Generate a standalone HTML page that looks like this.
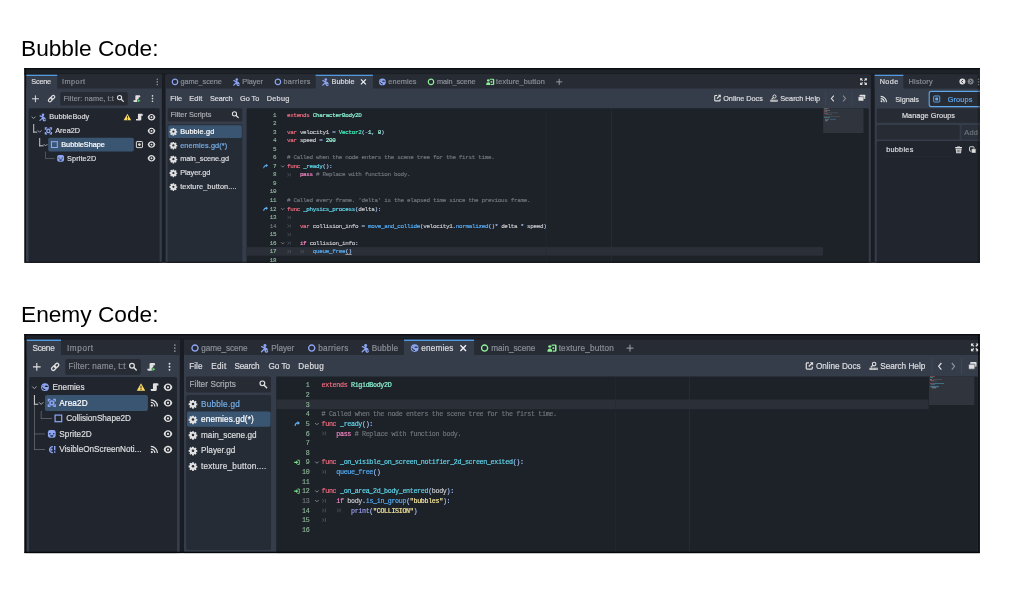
<!DOCTYPE html>
<html><head><meta charset="utf-8"><title>Code</title><style>
html,body{margin:0;padding:0;background:#fff;}
body{width:1024px;height:613px;position:relative;overflow:hidden;font-family:"Liberation Sans", sans-serif;}
.h{position:absolute;left:21.2px;font-size:22.7px;line-height:26px;color:#000;white-space:nowrap;font-family:"Liberation Sans", sans-serif;will-change:transform;}
.shot{position:absolute;overflow:hidden;will-change:transform;}
.shot>svg{position:absolute;left:0;top:0;width:100%;height:100%;}
.shot svg svg{overflow:visible;}
.t,.m{position:absolute;white-space:pre;-webkit-text-stroke:.2px currentColor;}
.t{font-family:"Liberation Sans", sans-serif;}
.m{font-family:"Liberation Mono", monospace;}
.m,.m span{-webkit-text-stroke:.14px currentColor;}
</style></head><body>
<div class="h" style="top:34.5px;">Bubble Code:</div>
<div class="h" style="top:300.5px;">Enemy Code:</div>
<div class="shot" style="left:24px;top:68px;width:956px;height:195px;"><svg viewBox="0 0 956 195"><clipPath id="c68"><rect x="0.3" y="0" width="955.6" height="194.8"/></clipPath><g clip-path="url(#c68)">
<rect x="0.3" y="0" width="955.6" height="194.8" fill="#191d23"/>
<rect x="0.3" y="0" width="955.6" height="6.6" fill="#1d2128"/>
<rect x="0.3" y="0" width="955.6" height="1.1" fill="#0b0d11"/>
<rect x="0.3" y="1.1" width="955.6" height="0.8" fill="#14171c"/>
<rect x="0.3" y="5.4" width="955.6" height="1.2" fill="#1a1b20"/>
<rect x="1.6" y="6.6" width="136.2" height="188.2" fill="#363d4a"/>
<rect x="1.6" y="6.6" width="136.2" height="14" fill="#262b34" rx="1.5"/>
<rect x="2.4" y="6.6" width="30.8" height="14.4" fill="#363d4a"/>
<rect x="2.4" y="6.8" width="30.8" height="1.2" fill="#4f9ae0"/>
<svg viewBox="0 0 16 16" x="129.4" y="10" width="7.8" height="7.8" ><circle cx="8" cy="2.500" r="1.700" fill="#8a8e96"/><circle cx="8" cy="8" r="1.700" fill="#8a8e96"/><circle cx="8" cy="13.500" r="1.700" fill="#8a8e96"/></svg>
<svg viewBox="0 0 16 16" x="7.5" y="26.9" width="7.8" height="7.8" ><path d="M8 1v14M1 8h14" stroke="#e0e0e0" stroke-width="2"/></svg>
<svg viewBox="0 0 16 16" x="23.7" y="26.7" width="7.8" height="7.8" ><g fill="none" stroke="#e0e0e0" stroke-width="2.400" transform="rotate(-45 8 8)"><rect x="0" y="5" width="9" height="6" rx="3"/><rect x="7" y="5" width="9" height="6" rx="3"/></g></svg>
<rect x="36.4" y="23.9" width="67.3" height="13.7" fill="#262b34" rx="1.5"/>
<svg viewBox="0 0 16 16" x="92.4" y="26.4" width="7.8" height="7.8" ><circle cx="6.500" cy="6.500" r="4.300" fill="none" stroke="#e0e0e0" stroke-width="2.200"/><path d="M9.800 9.800 14.300 14.300" stroke="#e0e0e0" stroke-width="2.600" stroke-linecap="round"/></svg>
<svg viewBox="0 0 16 16" x="108.9" y="26.7" width="7.8" height="7.8" ><path fill="#e0e0e0" d="M6.500 1H13a2 2 0 0 1 2 2v2h-3v3.500L9 10v5H3a2 2 0 0 1-2-2v-1.500h4V3a2 2 0 0 1 1.500-2z"/><path fill="#5fd26b" d="M10.300 9.300 15.600 12.400 10.300 15.500z"/></svg>
<svg viewBox="0 0 16 16" x="124.6" y="26.7" width="7.8" height="7.8" ><circle cx="8" cy="2.500" r="1.700" fill="#e0e0e0"/><circle cx="8" cy="8" r="1.700" fill="#e0e0e0"/><circle cx="8" cy="13.500" r="1.700" fill="#e0e0e0"/></svg>
<rect x="4.6" y="40.3" width="131" height="154.5" fill="#21262e" rx="1.5"/>
<rect x="9.2" y="56" width="1" height="8.6" fill="#c3c5c9"/>
<rect x="9.2" y="63.6" width="4" height="1" fill="#c3c5c9"/>
<rect x="15.2" y="70" width="1" height="8.3" fill="#c3c5c9"/>
<rect x="15.2" y="77.3" width="4.4" height="1" fill="#c3c5c9"/>
<rect x="21.3" y="83.6" width="0.6" height="7" fill="#6d7178"/>
<rect x="21.3" y="90" width="9.3" height="0.6" fill="#6d7178"/>
<rect x="24.2" y="69.7" width="85.6" height="13.9" fill="#3a5572" rx="1.8"/>
<svg viewBox="0 0 16 16" x="6.8" y="46.7" width="5.6" height="5.6" ><path d="M2.500 5.500 8 11l5.500-5.500" fill="none" stroke="#a9acb2" stroke-width="2.500"/></svg>
<svg viewBox="0 0 16 16" x="14.5" y="45.3" width="7.8" height="7.8" ><g fill="none" stroke="#8da5f3" stroke-width="2.500" stroke-linecap="round" stroke-linejoin="round"><path d="M9 6 7.600 10.300M8.700 7.600 3.200 5.300M8.700 7.800 12.600 9.600M7.600 10.300 3 14.600M7.600 10.300 10 11"/><path d="M13.800 11.600A2.300 2.300 0 1 0 13.800 14.400"/></g><circle cx="9.200" cy="3.100" r="2.700" fill="#8da5f3"/></svg>
<svg viewBox="0 0 16 16" x="99.5" y="45.3" width="7.8" height="7.8" ><path fill="#ffdd65" d="M8 .8 15.700 14.500H.3z"/><path d="M7.100 5.200h1.800v5.200H7.100zM7.100 11.300h1.800v1.800H7.100z" fill="#21262e"/></svg>
<svg viewBox="0 0 16 16" x="111.5" y="45.3" width="7.8" height="7.8" ><path fill="#e0e0e0" d="M6.500 1H13a2 2 0 0 1 2 2v2h-3v7a3 3 0 0 1-3 3H3a2 2 0 0 1-2-2v-1.500h4V3a2 2 0 0 1 1.500-2z"/></svg>
<svg viewBox="0 0 16 16" x="123.6" y="45.3" width="7.8" height="7.8" ><path fill="#e0e0e0" fill-rule="evenodd" d="M8 1.300C4.300 1.300 1.400 4 .2 7.600a1.200 1.200 0 0 0 0 .8C1.400 12 4.300 14.700 8 14.700s6.600-2.700 7.800-6.300a1.200 1.200 0 0 0 0-.8C14.600 4 11.700 1.300 8 1.300zM8 3.700a4.300 4.300 0 0 1 0 8.600 4.300 4.300 0 0 1 0-8.600zM8 6.100a1.900 1.900 0 0 0 0 3.800 1.900 1.900 0 0 0 0-3.800z"/></svg>
<svg viewBox="0 0 16 16" x="12.8" y="60.4" width="5.6" height="5.6" ><path d="M2.500 5.500 8 11l5.500-5.500" fill="none" stroke="#a9acb2" stroke-width="2.500"/></svg>
<svg viewBox="0 0 16 16" x="20.5" y="59" width="7.8" height="7.8" ><g fill="#8da5f3"><path d="M.5.500h5v2.700H3.200v2.300H.5zM15.500.500v5h-2.700V3.200h-2.300V.500zM.5 15.500v-5h2.700v2.300h2.300v2.700zM15.500 15.500h-5v-2.700h2.300v-2.300h2.700z"/></g><circle cx="8" cy="8" r="3.400" fill="none" stroke="#8da5f3" stroke-width="2.800"/></svg>
<svg viewBox="0 0 16 16" x="123.6" y="59" width="7.8" height="7.8" ><path fill="#e0e0e0" fill-rule="evenodd" d="M8 1.300C4.300 1.300 1.400 4 .2 7.600a1.200 1.200 0 0 0 0 .8C1.400 12 4.300 14.700 8 14.700s6.600-2.700 7.800-6.300a1.200 1.200 0 0 0 0-.8C14.600 4 11.700 1.300 8 1.300zM8 3.700a4.300 4.300 0 0 1 0 8.600 4.300 4.300 0 0 1 0-8.600zM8 6.100a1.900 1.900 0 0 0 0 3.800 1.900 1.900 0 0 0 0-3.800z"/></svg>
<svg viewBox="0 0 16 16" x="18.8" y="74.1" width="5.6" height="5.6" ><path d="M2.500 5.500 8 11l5.500-5.500" fill="none" stroke="#a9acb2" stroke-width="2.500"/></svg>
<svg viewBox="0 0 16 16" x="26.5" y="72.7" width="7.8" height="7.8" ><rect x="2" y="2" width="12" height="12" fill="none" stroke="#8da5f3" stroke-width="2.200"/></svg>
<svg viewBox="0 0 16 16" x="111.5" y="72.7" width="7.8" height="7.8" ><rect x="1.800" y="1.800" width="12.400" height="12.400" rx="1.200" fill="none" stroke="#e0e0e0" stroke-width="2"/><circle cx="8" cy="8" r="2.700" fill="#e0e0e0"/></svg>
<svg viewBox="0 0 16 16" x="123.6" y="72.7" width="7.8" height="7.8" ><path fill="#e0e0e0" fill-rule="evenodd" d="M8 1.300C4.300 1.300 1.400 4 .2 7.600a1.200 1.200 0 0 0 0 .8C1.400 12 4.300 14.700 8 14.700s6.600-2.700 7.800-6.300a1.200 1.200 0 0 0 0-.8C14.600 4 11.700 1.300 8 1.300zM8 3.700a4.300 4.300 0 0 1 0 8.600 4.300 4.300 0 0 1 0-8.600zM8 6.100a1.900 1.900 0 0 0 0 3.800 1.900 1.900 0 0 0 0-3.800z"/></svg>
<svg viewBox="0 0 16 16" x="32.7" y="86.4" width="7.8" height="7.8" ><path fill="#8da5f3" d="M5 1h6a4 4 0 0 1 4 4v6a4 4 0 0 1-4 4H5a4 4 0 0 1-4-4V5a4 4 0 0 1 4-4z"/><circle cx="4.600" cy="7.600" r="1.400" fill="#21262e"/><circle cx="11.400" cy="7.600" r="1.400" fill="#21262e"/><path d="M5.200 10.600h5.600v.6A2 2 0 0 1 8.800 13.200H7.200A2 2 0 0 1 5.200 11.200z" fill="#21262e"/></svg>
<svg viewBox="0 0 16 16" x="123.6" y="86.4" width="7.8" height="7.8" ><path fill="#e0e0e0" fill-rule="evenodd" d="M8 1.300C4.300 1.300 1.400 4 .2 7.600a1.200 1.200 0 0 0 0 .8C1.400 12 4.300 14.700 8 14.700s6.600-2.700 7.800-6.300a1.200 1.200 0 0 0 0-.8C14.600 4 11.700 1.300 8 1.300zM8 3.700a4.300 4.300 0 0 1 0 8.600 4.300 4.300 0 0 1 0-8.600zM8 6.100a1.900 1.900 0 0 0 0 3.800 1.900 1.900 0 0 0 0-3.800z"/></svg>
<rect x="141.6" y="6.6" width="705.2" height="188.2" fill="#363d4a"/>
<rect x="141.6" y="6.6" width="705.2" height="14" fill="#262b34" rx="1.5"/>
<rect x="291.6" y="6.6" width="57.3" height="14.4" fill="#363d4a"/>
<rect x="291.6" y="6.8" width="57.3" height="1.2" fill="#4f9ae0"/>
<svg viewBox="0 0 16 16" x="147.1" y="10" width="7.8" height="7.8" ><circle cx="8" cy="8" r="5.600" fill="none" stroke="#8da5f3" stroke-width="2.400"/></svg>
<svg viewBox="0 0 16 16" x="208.3" y="10" width="7.8" height="7.8" ><g fill="none" stroke="#8da5f3" stroke-width="2.500" stroke-linecap="round" stroke-linejoin="round"><path d="M9 6 7.600 10.300M8.700 7.600 3.200 5.300M8.700 7.800 12.600 9.600M7.600 10.300 3 14.600M7.600 10.300 10 11"/><path d="M13.800 11.600A2.300 2.300 0 1 0 13.800 14.400"/></g><circle cx="9.200" cy="3.100" r="2.700" fill="#8da5f3"/></svg>
<svg viewBox="0 0 16 16" x="250" y="10" width="7.8" height="7.8" ><circle cx="8" cy="8" r="5.600" fill="none" stroke="#8da5f3" stroke-width="2.400"/></svg>
<svg viewBox="0 0 16 16" x="297.3" y="10" width="7.8" height="7.8" ><g fill="none" stroke="#8da5f3" stroke-width="2.500" stroke-linecap="round" stroke-linejoin="round"><path d="M9 6 7.600 10.300M8.700 7.600 3.200 5.300M8.700 7.800 12.600 9.600M7.600 10.300 3 14.600M7.600 10.300 10 11"/><path d="M13.800 11.600A2.300 2.300 0 1 0 13.800 14.400"/></g><circle cx="9.200" cy="3.100" r="2.700" fill="#8da5f3"/></svg>
<svg viewBox="0 0 16 16" x="335.8" y="10.3" width="7.2" height="7.2" ><path d="M2.500 2.500l11 11M13.500 2.500 2.500 13.500" stroke="#f0f0f0" stroke-width="2.800"/></svg>
<svg viewBox="0 0 16 16" x="354.5" y="10" width="7.8" height="7.8" ><circle cx="8" cy="8" r="7" fill="#8da5f3"/><path d="M7.200 7.600a3.300 3.300 0 0 1 6.400 0z" fill="#1d2229"/><path d="M3.500 9.300c.9 1.500 2.400 2.600 4.300 3" fill="none" stroke="#1d2229" stroke-width="2" stroke-linecap="round"/><path d="M2.300 6.200 5.500 4.600" fill="none" stroke="#5a6aa8" stroke-width="1.200"/></svg>
<svg viewBox="0 0 16 16" x="403.1" y="10" width="7.8" height="7.8" ><circle cx="8" cy="8" r="5.600" fill="none" stroke="#8eef97" stroke-width="2.400"/></svg>
<svg viewBox="0 0 16 16" x="462.5" y="10" width="7.8" height="7.8" ><g fill="#8eef97" transform="translate(8 8) scale(1.13 .95) translate(-8 -8)"><circle cx="4.200" cy="5" r="2.500"/><path d="M.3 14.800C.3 10.600 2 9 4.200 9S8.100 10.600 8.100 14.800z"/><path d="M7 1.200h6a2 2 0 0 1 2 2v9.600a2 2 0 0 1-2 2H9v-2.400h3.500V3.600H7z"/><circle cx="9.800" cy="8" r="1.700"/></g></svg>
<svg viewBox="0 0 16 16" x="531.7" y="10.4" width="7" height="7" ><path d="M8 1v14M1 8h14" stroke="#a4a7ac" stroke-width="2"/></svg>
<svg viewBox="0 0 16 16" x="835.6" y="9.7" width="7.8" height="7.8" ><g fill="#e0e0e0"><path d="M1 1h5.500L4.600 2.900 7 5.300 5.300 7 2.900 4.600 1 6.500zM15 1v5.500L13.100 4.600 10.700 7 9 5.300l2.400-2.400L9.500 1zM1 15V9.500l1.900 1.900L5.300 9 7 10.700l-2.400 2.400L6.500 15zM15 15H9.500l1.900-1.900L9 10.700 10.700 9l2.400 2.400L15 9.500z"/></g></svg>
<svg viewBox="0 0 16 16" x="689.5" y="26.3" width="7.8" height="7.8" ><path d="M7.500 2.500H4A1.500 1.500 0 0 0 2.500 4v8A1.500 1.500 0 0 0 4 13.500h8a1.500 1.500 0 0 0 1.500-1.500V9" fill="none" stroke="#e0e0e0" stroke-width="2.200"/><path d="M7 9l6-6" fill="none" stroke="#e0e0e0" stroke-width="2.400"/><path d="M9 1h6v6z" fill="#e0e0e0"/></svg>
<svg viewBox="0 0 16 16" x="746.1" y="26.3" width="7.8" height="7.8" ><circle cx="9" cy="4.500" r="3.200" fill="none" stroke="#e0e0e0" stroke-width="2"/><path d="M6.600 6.900 3.200 10.300" stroke="#e0e0e0" stroke-width="2.200"/><path d="M.5 11h15v4.500H.5z" fill="#e0e0e0"/><path d="M3.200 12.300v2M5.900 12.300v2M8.400 12.300v2M10.900 12.300v2M13.200 12.300v2" stroke="#363d4a" stroke-width="1"/></svg>
<rect x="801.5" y="23.5" width="0.6" height="14" fill="#444b58"/>
<svg viewBox="0 0 16 16" x="804.7" y="26.6" width="7.8" height="7.8" ><path d="M10.500 2 5.500 8l5 6" fill="none" stroke="#e0e0e0" stroke-width="2.200"/></svg>
<svg viewBox="0 0 16 16" x="816.4" y="26.6" width="7.8" height="7.8" ><path d="M5.500 2 10.500 8l-5 6" fill="none" stroke="#8a8e96" stroke-width="2.200"/></svg>
<rect x="827.6" y="23.5" width="0.6" height="14" fill="#444b58"/>
<svg viewBox="0 0 16 16" x="833.7" y="26" width="7.8" height="7.8" ><g fill="#e0e0e0"><rect x="4" y="1.500" width="11.500" height="8.500" rx="1.200"/><rect x="1" y="5.500" width="11.500" height="9" rx="1.200" stroke="#363d4a" stroke-width="1.200"/></g></svg>
<rect x="143.7" y="40.3" width="74.6" height="13.3" fill="#262b34" rx="1.5"/>
<svg viewBox="0 0 16 16" x="207.3" y="42.7" width="7.8" height="7.8" ><circle cx="6.500" cy="6.500" r="4.300" fill="none" stroke="#e0e0e0" stroke-width="2.200"/><path d="M9.800 9.800 14.300 14.300" stroke="#e0e0e0" stroke-width="2.600" stroke-linecap="round"/></svg>
<rect x="143.7" y="56.2" width="74.6" height="138.6" fill="#262c36" rx="1.5"/>
<rect x="144.2" y="57.3" width="73.6" height="12.7" fill="#3a5572" rx="1.5"/>
<svg viewBox="0 0 16 16" x="145.5" y="59.7" width="7.8" height="7.8" ><path fill="#e0e0e0" d="M6.600.8h2.800l.4 2.100 1 .4 1.800-1.200 2 2-1.200 1.800.4 1 2.100.4v2.800l-2.100.4-.4 1 1.200 1.800-2 2-1.800-1.200-1 .4-.4 2.100H6.600l-.4-2.100-1-.4-1.800 1.200-2-2 1.200-1.800-.4-1-2.100-.4V6.600l2.100-.4.4-1-1.200-1.800 2-2 1.800 1.200 1-.4z"/><circle cx="8" cy="8" r="2.300" fill="#262c36"/></svg>
<svg viewBox="0 0 16 16" x="145.5" y="73.5" width="7.8" height="7.8" ><path fill="#e0e0e0" d="M6.600.8h2.800l.4 2.100 1 .4 1.800-1.200 2 2-1.200 1.800.4 1 2.100.4v2.800l-2.100.4-.4 1 1.200 1.800-2 2-1.800-1.200-1 .4-.4 2.100H6.600l-.4-2.100-1-.4-1.800 1.200-2-2 1.200-1.800-.4-1-2.100-.4V6.600l2.100-.4.4-1-1.200-1.800 2-2 1.800 1.200 1-.4z"/><circle cx="8" cy="8" r="2.300" fill="#262c36"/></svg>
<svg viewBox="0 0 16 16" x="145.5" y="87.3" width="7.8" height="7.8" ><path fill="#e0e0e0" d="M6.600.8h2.800l.4 2.100 1 .4 1.800-1.200 2 2-1.200 1.800.4 1 2.100.4v2.800l-2.100.4-.4 1 1.200 1.800-2 2-1.800-1.200-1 .4-.4 2.100H6.600l-.4-2.100-1-.4-1.800 1.200-2-2 1.200-1.800-.4-1-2.100-.4V6.600l2.100-.4.4-1-1.200-1.800 2-2 1.800 1.200 1-.4z"/><circle cx="8" cy="8" r="2.300" fill="#262c36"/></svg>
<svg viewBox="0 0 16 16" x="145.5" y="101.1" width="7.8" height="7.8" ><path fill="#e0e0e0" d="M6.600.8h2.800l.4 2.100 1 .4 1.800-1.200 2 2-1.200 1.800.4 1 2.100.4v2.800l-2.100.4-.4 1 1.200 1.800-2 2-1.800-1.200-1 .4-.4 2.100H6.600l-.4-2.100-1-.4-1.800 1.200-2-2 1.200-1.800-.4-1-2.100-.4V6.600l2.100-.4.4-1-1.200-1.800 2-2 1.800 1.200 1-.4z"/><circle cx="8" cy="8" r="2.300" fill="#262c36"/></svg>
<svg viewBox="0 0 16 16" x="145.5" y="114.9" width="7.8" height="7.8" ><path fill="#e0e0e0" d="M6.600.8h2.800l.4 2.100 1 .4 1.800-1.200 2 2-1.200 1.800.4 1 2.100.4v2.800l-2.100.4-.4 1 1.200 1.800-2 2-1.800-1.200-1 .4-.4 2.100H6.600l-.4-2.100-1-.4-1.800 1.200-2-2 1.200-1.800-.4-1-2.100-.4V6.600l2.100-.4.4-1-1.200-1.800 2-2 1.800 1.200 1-.4z"/><circle cx="8" cy="8" r="2.300" fill="#262c36"/></svg>
<rect x="222.6" y="40.3" width="622.2" height="154.5" fill="#1d2229" rx="1.2"/>
<rect x="222.6" y="179.12" width="576.4" height="8.53" fill="#2b3038"/>
<rect x="521.8" y="40.3" width="0.6" height="154.5" fill="#262b33"/>
<rect x="587" y="40.3" width="0.6" height="154.5" fill="#2a3039"/>
<rect x="799.2" y="40.3" width="40.3" height="24.7" fill="#30353d"/>
<rect x="800" y="40" width="5" height="0.45" fill="#ff7085" opacity=".7"/>
<rect x="800" y="40.78" width="3" height="0.45" fill="#42ffc2" opacity=".7"/>
<rect x="800" y="42.34" width="2" height="0.45" fill="#ff7085" opacity=".7"/>
<rect x="802" y="42.34" width="4" height="0.45" fill="#cdcfd2" opacity=".7"/>
<rect x="800" y="43.12" width="2" height="0.45" fill="#ff7085" opacity=".7"/>
<rect x="802" y="43.12" width="1" height="0.45" fill="#cdcfd2" opacity=".7"/>
<rect x="800" y="44.68" width="14" height="0.45" fill="#73777e" opacity=".7"/>
<rect x="800" y="45.46" width="4" height="0.45" fill="#ff7085" opacity=".7"/>
<rect x="801" y="46.24" width="7" height="0.45" fill="#73777e" opacity=".7"/>
<rect x="800" y="48.58" width="16" height="0.45" fill="#73777e" opacity=".7"/>
<rect x="800" y="49.36" width="6" height="0.45" fill="#62dcf2" opacity=".7"/>
<rect x="801" y="50.92" width="4" height="0.45" fill="#cdcfd2" opacity=".7"/>
<rect x="806" y="50.92" width="6" height="0.45" fill="#57b3ff" opacity=".7"/>
<rect x="801" y="52.48" width="3" height="0.45" fill="#cdcfd2" opacity=".7"/>
<rect x="802" y="53.26" width="1" height="0.45" fill="#57b3ff" opacity=".7"/>
<svg viewBox="0 0 16 16" x="239" y="95.48" width="5.2" height="5.2" ><path fill="#5fb2f0" d="M9 1 15.500 6.300 9 11.600V8.500C6 8.500 4.200 10 3.700 14.800H.8C.8 8 4.500 4.600 9 4.300z"/></svg>
<svg viewBox="0 0 16 16" x="239" y="138.13" width="5.2" height="5.2" ><path fill="#5fb2f0" d="M9 1 15.500 6.300 9 11.600V8.500C6 8.500 4.200 10 3.700 14.800H.8C.8 8 4.500 4.600 9 4.300z"/></svg>
<svg viewBox="0 0 16 16" x="256.2" y="95.88" width="5" height="5" ><path d="M3 5.500 8 10.500l5-5" fill="none" stroke="#9da1a8" stroke-width="2.200"/></svg>
<svg viewBox="0 0 16 16" x="256.2" y="138.53" width="5" height="5" ><path d="M3 5.500 8 10.500l5-5" fill="none" stroke="#9da1a8" stroke-width="2.200"/></svg>
<svg viewBox="0 0 16 16" x="256.2" y="172.65" width="5" height="5" ><path d="M3 5.500 8 10.500l5-5" fill="none" stroke="#9da1a8" stroke-width="2.200"/></svg>
<svg viewBox="0 0 16 16" x="262.8" y="104.41" width="4.8" height="4.8" ><path d="M2 3 7.500 8 2 13M11.500 2.500v11" fill="none" stroke="#5b616b" stroke-width="2"/></svg>
<svg viewBox="0 0 16 16" x="262.8" y="147.06" width="4.8" height="4.8" ><path d="M2 3 7.500 8 2 13M11.500 2.500v11" fill="none" stroke="#5b616b" stroke-width="2"/></svg>
<svg viewBox="0 0 16 16" x="262.8" y="155.59" width="4.8" height="4.8" ><path d="M2 3 7.500 8 2 13M11.500 2.500v11" fill="none" stroke="#5b616b" stroke-width="2"/></svg>
<svg viewBox="0 0 16 16" x="262.8" y="164.12" width="4.8" height="4.8" ><path d="M2 3 7.500 8 2 13M11.500 2.500v11" fill="none" stroke="#5b616b" stroke-width="2"/></svg>
<svg viewBox="0 0 16 16" x="262.8" y="172.65" width="4.8" height="4.8" ><path d="M2 3 7.500 8 2 13M11.500 2.500v11" fill="none" stroke="#5b616b" stroke-width="2"/></svg>
<svg viewBox="0 0 16 16" x="262.8" y="181.18" width="4.8" height="4.8" ><path d="M2 3 7.500 8 2 13M11.500 2.500v11" fill="none" stroke="#5b616b" stroke-width="2"/></svg>
<svg viewBox="0 0 16 16" x="275.78" y="181.18" width="4.8" height="4.8" ><path d="M2 3 7.500 8 2 13M11.500 2.500v11" fill="none" stroke="#5b616b" stroke-width="2"/></svg>
<rect x="321.33" y="186.28" width="6.49" height="0.6" fill="#cfd2d6"/>
<rect x="850.7" y="6.6" width="105.2" height="188.2" fill="#363d4a"/>
<rect x="850.7" y="6.6" width="105.2" height="14" fill="#262b34"/>
<rect x="850.7" y="6.6" width="28.7" height="14.4" fill="#363d4a"/>
<rect x="850.7" y="6.8" width="28.7" height="1.2" fill="#4f9ae0"/>
<svg viewBox="0 0 16 16" x="935.2" y="10.4" width="6.4" height="6.4" ><circle cx="8" cy="8" r="7.500" fill="#e0e0e0"/><path d="M9.800 3.800 5.600 8l4.200 4.200" fill="none" stroke="#262b34" stroke-width="2.400"/></svg>
<svg viewBox="0 0 16 16" x="943.4" y="10.4" width="6.4" height="6.4" ><circle cx="8" cy="8" r="7.500" fill="#7b7f86"/><path d="M6.200 3.800 10.400 8l-4.200 4.200" fill="none" stroke="#262b34" stroke-width="2.400"/></svg>
<svg viewBox="0 0 16 16" x="950.7" y="10" width="7.8" height="7.8" ><circle cx="8" cy="2.500" r="1.700" fill="#8a8e96"/><circle cx="8" cy="8" r="1.700" fill="#8a8e96"/><circle cx="8" cy="13.500" r="1.700" fill="#8a8e96"/></svg>
<svg viewBox="0 0 16 16" x="855.9" y="27.1" width="7.8" height="7.8" ><g fill="none" stroke="#e0e0e0" stroke-width="2.300"><path d="M1.500 7.200A7.300 7.300 0 0 1 8.800 14.500M1.500 2.500a12 12 0 0 1 12 12"/></g><circle cx="3.300" cy="12.700" r="2" fill="#e0e0e0"/></svg>
<rect x="905.2" y="23.4" width="54.7" height="15.2" fill="#262b34" rx="2" stroke="#5fa8ec" stroke-width="1.1"/>
<svg viewBox="0 0 16 16" x="908.8" y="27.1" width="7.8" height="7.8" ><rect x="1.800" y="1.800" width="12.400" height="12.400" rx="1.200" fill="none" stroke="#5fa8ec" stroke-width="2"/><rect x="5" y="5" width="6" height="6" rx="1" fill="#5fa8ec"/></svg>
<rect x="852.8" y="40.6" width="107.1" height="14.1" fill="#262b34" rx="1.5"/>
<rect x="852.8" y="57" width="82.9" height="14.6" fill="#262b34" rx="1.5"/>
<rect x="937.3" y="57" width="22.6" height="14.6" fill="#2b313a" rx="1.5"/>
<rect x="852.8" y="73.1" width="107.1" height="121.7" fill="#21262e" rx="1.5"/>
<rect x="860" y="88.6" width="67" height="0.4" fill="#2a3038"/>
<svg viewBox="0 0 16 16" x="930.7" y="77.9" width="7.8" height="7.8" ><path fill="#e0e0e0" d="M5 1h6v1.500h4v2.200H1V2.500h4zM2 6h12l-1 9H3z"/><path d="M5.300 7.500v6M8 7.500v6M10.700 7.500v6" stroke="#21262e" stroke-width="1.100"/></svg>
<svg viewBox="0 0 16 16" x="944.7" y="77.9" width="7.8" height="7.8" ><rect x="1.800" y="1.800" width="9" height="9" rx="1.200" fill="none" stroke="#e0e0e0" stroke-width="2"/><rect x="5.800" y="5.800" width="9" height="9" rx="1.200" fill="#e0e0e0" stroke="#21262e" stroke-width="1"/></svg>
<rect x="0.3" y="0" width="1.4" height="194.8" fill="#06070a"/>
<rect x="0.3" y="193.8" width="955.6" height="1" fill="#06070a"/>
<rect x="953.7" y="6.6" width="2.2" height="188.2" fill="#000" opacity=".25"/>
</g></svg>
<span class="t" style="top:9.14px;height:10.22px;line-height:10.22px;font-size:7.3px;color:#dcdde0;left:7.37px;letter-spacing:-0.24px;">Scene</span>
<span class="t" style="top:9.14px;height:10.22px;line-height:10.22px;font-size:7.3px;color:#8a8e96;left:37.97px;letter-spacing:0.49px;">Import</span>
<span class="t" style="top:25.84px;height:10.22px;line-height:10.22px;font-size:7.3px;color:#8a8e96;left:39.47px;letter-spacing:0.11px;">Filter: name, t:t</span>
<span class="t" style="top:44.44px;height:10.22px;line-height:10.22px;font-size:7.3px;color:#dcdde0;left:25.37px;letter-spacing:0.05px;">BubbleBody</span>
<span class="t" style="top:58.14px;height:10.22px;line-height:10.22px;font-size:7.3px;color:#dcdde0;left:31.17px;letter-spacing:0.04px;">Area2D</span>
<span class="t" style="top:71.84px;height:10.22px;line-height:10.22px;font-size:7.3px;color:#ffffff;left:37.27px;letter-spacing:-0.03px;">BubbleShape</span>
<span class="t" style="top:85.54px;height:10.22px;line-height:10.22px;font-size:7.3px;color:#dcdde0;left:43.07px;letter-spacing:0.11px;">Sprite2D</span>
<span class="t" style="top:9.14px;height:10.22px;line-height:10.22px;font-size:7.3px;color:#8a8e96;left:156.47px;letter-spacing:-0.05px;">game_scene</span>
<span class="t" style="top:9.14px;height:10.22px;line-height:10.22px;font-size:7.3px;color:#8a8e96;left:218.27px;letter-spacing:0.01px;">Player</span>
<span class="t" style="top:9.14px;height:10.22px;line-height:10.22px;font-size:7.3px;color:#8a8e96;left:259.47px;letter-spacing:0.33px;">barriers</span>
<span class="t" style="top:9.14px;height:10.22px;line-height:10.22px;font-size:7.3px;color:#dcdde0;left:307.47px;letter-spacing:0.09px;">Bubble</span>
<span class="t" style="top:9.14px;height:10.22px;line-height:10.22px;font-size:7.3px;color:#8a8e96;left:364.37px;letter-spacing:0.08px;">enemies</span>
<span class="t" style="top:9.14px;height:10.22px;line-height:10.22px;font-size:7.3px;color:#8a8e96;left:413.07px;letter-spacing:-0.1px;">main_scene</span>
<span class="t" style="top:9.14px;height:10.22px;line-height:10.22px;font-size:7.3px;color:#8a8e96;left:471.97px;letter-spacing:0.17px;">texture_button</span>
<span class="t" style="top:25.74px;height:10.22px;line-height:10.22px;font-size:7.3px;color:#dcdde0;left:146.37px;letter-spacing:0px;">File</span>
<span class="t" style="top:25.74px;height:10.22px;line-height:10.22px;font-size:7.3px;color:#dcdde0;left:165.27px;letter-spacing:0.16px;">Edit</span>
<span class="t" style="top:25.74px;height:10.22px;line-height:10.22px;font-size:7.3px;color:#dcdde0;left:185.97px;letter-spacing:-0.09px;">Search</span>
<span class="t" style="top:25.74px;height:10.22px;line-height:10.22px;font-size:7.3px;color:#dcdde0;left:215.97px;letter-spacing:0px;">Go To</span>
<span class="t" style="top:25.74px;height:10.22px;line-height:10.22px;font-size:7.3px;color:#dcdde0;left:242.67px;letter-spacing:0.29px;">Debug</span>
<span class="t" style="top:25.74px;height:10.22px;line-height:10.22px;font-size:7.3px;color:#dcdde0;left:699.17px;letter-spacing:0px;">Online Docs</span>
<span class="t" style="top:25.74px;height:10.22px;line-height:10.22px;font-size:7.3px;color:#dcdde0;left:756.27px;letter-spacing:-0.04px;">Search Help</span>
<span class="t" style="top:42.14px;height:10.22px;line-height:10.22px;font-size:7.3px;color:#a9acb2;left:146.57px;letter-spacing:0.02px;">Filter Scripts</span>
<span class="t" style="top:58.84px;height:10.22px;line-height:10.22px;font-size:7.3px;color:#ffffff;left:156.17px;letter-spacing:0.16px;">Bubble.gd</span>
<span class="t" style="top:72.64px;height:10.22px;line-height:10.22px;font-size:7.3px;color:#74aee6;left:156.17px;letter-spacing:0.14px;">enemies.gd(*)</span>
<span class="t" style="top:86.44px;height:10.22px;line-height:10.22px;font-size:7.3px;color:#dcdde0;left:156.17px;letter-spacing:-0.05px;">main_scene.gd</span>
<span class="t" style="top:100.24px;height:10.22px;line-height:10.22px;font-size:7.3px;color:#dcdde0;left:156.17px;letter-spacing:-0.04px;">Player.gd</span>
<span class="t" style="top:114.04px;height:10.22px;line-height:10.22px;font-size:7.3px;color:#dcdde0;left:156.17px;letter-spacing:0.1px;">texture_button....</span>
<span class="m" style="top:43.67px;height:8.25px;line-height:8.25px;font-size:5.9px;color:#8fb79a;right:703.8px;text-align:right;letter-spacing:-0.29px;">1</span>
<span class="m" style="top:52.2px;height:8.25px;line-height:8.25px;font-size:5.9px;color:#8fb79a;right:703.8px;text-align:right;letter-spacing:-0.29px;">2</span>
<span class="m" style="top:60.73px;height:8.25px;line-height:8.25px;font-size:5.9px;color:#8fb79a;right:703.8px;text-align:right;letter-spacing:-0.29px;">3</span>
<span class="m" style="top:69.26px;height:8.25px;line-height:8.25px;font-size:5.9px;color:#8fb79a;right:703.8px;text-align:right;letter-spacing:-0.29px;">4</span>
<span class="m" style="top:77.79px;height:8.25px;line-height:8.25px;font-size:5.9px;color:#8fb79a;right:703.8px;text-align:right;letter-spacing:-0.29px;">5</span>
<span class="m" style="top:86.32px;height:8.25px;line-height:8.25px;font-size:5.9px;color:#8fb79a;right:703.8px;text-align:right;letter-spacing:-0.29px;">6</span>
<span class="m" style="top:94.85px;height:8.25px;line-height:8.25px;font-size:5.9px;color:#8fb79a;right:703.8px;text-align:right;letter-spacing:-0.29px;">7</span>
<span class="m" style="top:103.38px;height:8.25px;line-height:8.25px;font-size:5.9px;color:#8fb79a;right:703.8px;text-align:right;letter-spacing:-0.29px;">8</span>
<span class="m" style="top:111.91px;height:8.25px;line-height:8.25px;font-size:5.9px;color:#8fb79a;right:703.8px;text-align:right;letter-spacing:-0.29px;">9</span>
<span class="m" style="top:120.44px;height:8.25px;line-height:8.25px;font-size:5.9px;color:#8fb79a;right:703.8px;text-align:right;letter-spacing:-0.29px;">10</span>
<span class="m" style="top:128.97px;height:8.25px;line-height:8.25px;font-size:5.9px;color:#8fb79a;right:703.8px;text-align:right;letter-spacing:-0.29px;">11</span>
<span class="m" style="top:137.5px;height:8.25px;line-height:8.25px;font-size:5.9px;color:#8fb79a;right:703.8px;text-align:right;letter-spacing:-0.29px;">12</span>
<span class="m" style="top:146.03px;height:8.25px;line-height:8.25px;font-size:5.9px;color:#8fb79a;right:703.8px;text-align:right;letter-spacing:-0.29px;">13</span>
<span class="m" style="top:154.56px;height:8.25px;line-height:8.25px;font-size:5.9px;color:#73777e;right:703.8px;text-align:right;letter-spacing:-0.29px;">14</span>
<span class="m" style="top:163.09px;height:8.25px;line-height:8.25px;font-size:5.9px;color:#8fb79a;right:703.8px;text-align:right;letter-spacing:-0.29px;">15</span>
<span class="m" style="top:171.62px;height:8.25px;line-height:8.25px;font-size:5.9px;color:#8fb79a;right:703.8px;text-align:right;letter-spacing:-0.29px;">16</span>
<span class="m" style="top:180.15px;height:8.25px;line-height:8.25px;font-size:5.9px;color:#8fb79a;right:703.8px;text-align:right;letter-spacing:-0.29px;">17</span>
<span class="m" style="top:188.68px;height:8.25px;line-height:8.25px;font-size:5.9px;color:#8fb79a;right:703.8px;text-align:right;letter-spacing:-0.29px;">18</span>
<span class="m" style="top:43.67px;height:8.25px;line-height:8.25px;font-size:5.9px;color:#cdcfd2;left:262.9px;letter-spacing:-0.29px;"><span style="color:#ff7085">extends </span><span style="color:#8fffdb">CharacterBody2D</span></span>
<span class="m" style="top:60.73px;height:8.25px;line-height:8.25px;font-size:5.9px;color:#cdcfd2;left:262.9px;letter-spacing:-0.29px;"><span style="color:#ff7085">var </span><span style="color:#cdcfd2">velocity1 </span><span style="color:#abc9ff">= </span><span style="color:#42ffc2">Vector2</span><span style="color:#abc9ff">(-</span><span style="color:#a1ffe0">1</span><span style="color:#abc9ff">, </span><span style="color:#a1ffe0">0</span><span style="color:#abc9ff">)</span></span>
<span class="m" style="top:69.26px;height:8.25px;line-height:8.25px;font-size:5.9px;color:#cdcfd2;left:262.9px;letter-spacing:-0.29px;"><span style="color:#ff7085">var </span><span style="color:#cdcfd2">speed </span><span style="color:#abc9ff">= </span><span style="color:#a1ffe0">200</span></span>
<span class="m" style="top:86.32px;height:8.25px;line-height:8.25px;font-size:5.9px;color:#cdcfd2;left:262.9px;letter-spacing:-0.29px;"><span style="color:#73777e"># Called when the node enters the scene tree for the first time.</span></span>
<span class="m" style="top:94.85px;height:8.25px;line-height:8.25px;font-size:5.9px;color:#cdcfd2;left:262.9px;letter-spacing:-0.29px;"><span style="color:#ff7085">func </span><span style="color:#62dcf2">_ready</span><span style="color:#abc9ff">():</span></span>
<span class="m" style="top:103.38px;height:8.25px;line-height:8.25px;font-size:5.9px;color:#cdcfd2;left:262.9px;letter-spacing:-0.29px;"><span style="color:#cdcfd2">    </span><span style="color:#ff8ccc">pass </span><span style="color:#73777e"># Replace with function body.</span></span>
<span class="m" style="top:128.97px;height:8.25px;line-height:8.25px;font-size:5.9px;color:#cdcfd2;left:262.9px;letter-spacing:-0.29px;"><span style="color:#73777e"># Called every frame. &#x27;delta&#x27; is the elapsed time since the previous frame.</span></span>
<span class="m" style="top:137.5px;height:8.25px;line-height:8.25px;font-size:5.9px;color:#cdcfd2;left:262.9px;letter-spacing:-0.29px;"><span style="color:#ff7085">func </span><span style="color:#62dcf2">_physics_process</span><span style="color:#abc9ff">(</span><span style="color:#cdcfd2">delta</span><span style="color:#abc9ff">):</span></span>
<span class="m" style="top:154.56px;height:8.25px;line-height:8.25px;font-size:5.9px;color:#cdcfd2;left:262.9px;letter-spacing:-0.29px;"><span style="color:#cdcfd2">    </span><span style="color:#ff7085">var </span><span style="color:#cdcfd2">collision_info </span><span style="color:#abc9ff">= </span><span style="color:#57b3ff">move_and_collide</span><span style="color:#abc9ff">(</span><span style="color:#cdcfd2">velocity1</span><span style="color:#abc9ff">.</span><span style="color:#57b3ff">normalized</span><span style="color:#abc9ff">()* </span><span style="color:#cdcfd2">delta </span><span style="color:#abc9ff">* </span><span style="color:#cdcfd2">speed</span><span style="color:#abc9ff">)</span></span>
<span class="m" style="top:171.62px;height:8.25px;line-height:8.25px;font-size:5.9px;color:#cdcfd2;left:262.9px;letter-spacing:-0.29px;"><span style="color:#cdcfd2">    </span><span style="color:#ff8ccc">if </span><span style="color:#cdcfd2">collision_info</span><span style="color:#abc9ff">:</span></span>
<span class="m" style="top:180.15px;height:8.25px;line-height:8.25px;font-size:5.9px;color:#cdcfd2;left:262.9px;letter-spacing:-0.29px;"><span style="color:#cdcfd2">        </span><span style="color:#57b3ff">queue_free</span><span style="color:#abc9ff">()</span></span>
<span class="t" style="top:9.14px;height:10.22px;line-height:10.22px;font-size:7.3px;color:#dcdde0;left:855.67px;letter-spacing:0.4px;">Node</span>
<span class="t" style="top:9.14px;height:10.22px;line-height:10.22px;font-size:7.3px;color:#8a8e96;left:884.57px;letter-spacing:0.22px;">History</span>
<span class="t" style="top:26.54px;height:10.22px;line-height:10.22px;font-size:7.3px;color:#dcdde0;left:871.27px;letter-spacing:-0.03px;">Signals</span>
<span class="t" style="top:26.54px;height:10.22px;line-height:10.22px;font-size:7.3px;color:#5fa8ec;left:923.67px;letter-spacing:0.14px;">Groups</span>
<span class="t" style="top:43.04px;height:10.22px;line-height:10.22px;font-size:7.3px;color:#dcdde0;left:877.97px;letter-spacing:0.06px;">Manage Groups</span>
<span class="t" style="top:59.64px;height:10.22px;line-height:10.22px;font-size:7.3px;color:#6f747c;left:940.37px;letter-spacing:0.18px;">Add</span>
<span class="t" style="top:77.24px;height:10.22px;line-height:10.22px;font-size:7.3px;color:#dcdde0;left:862.17px;letter-spacing:0.26px;">bubbles</span>
</div>
<div class="shot" style="left:24px;top:333px;width:956px;height:221px;"><svg viewBox="0 0 956 221"><clipPath id="c333"><rect x="0.3" y="0.9" width="955.5" height="219.4"/></clipPath><g clip-path="url(#c333)">
<rect x="0.3" y="0.9" width="955.5" height="219.4" fill="#191d23"/>
<rect x="0.3" y="0.9" width="955.5" height="5.9" fill="#1d2128"/>
<rect x="0.3" y="0.9" width="955.5" height="1.1" fill="#0b0d11"/>
<rect x="0.3" y="2" width="955.5" height="0.8" fill="#14171c"/>
<rect x="0.3" y="5.4" width="955.5" height="1.4" fill="#1a1b20"/>
<rect x="2.8" y="6.8" width="152.9" height="213.5" fill="#363d4a"/>
<rect x="2.8" y="6.8" width="152.9" height="15.2" fill="#262b34" rx="1.7"/>
<rect x="2.8" y="6.8" width="34.2" height="15.6" fill="#363d4a"/>
<rect x="2.8" y="6.6" width="34.2" height="1.4" fill="#4f9ae0"/>
<svg viewBox="0 0 16 16" x="146.39" y="10.69" width="8.81" height="8.81" ><circle cx="8" cy="2.500" r="1.700" fill="#8a8e96"/><circle cx="8" cy="8" r="1.700" fill="#8a8e96"/><circle cx="8" cy="13.500" r="1.700" fill="#8a8e96"/></svg>
<svg viewBox="0 0 16 16" x="8.4" y="29.5" width="8.8" height="8.8" ><path d="M8 1v14M1 8h14" stroke="#e0e0e0" stroke-width="2"/></svg>
<svg viewBox="0 0 16 16" x="26.79" y="29.39" width="8.81" height="8.81" ><g fill="none" stroke="#e0e0e0" stroke-width="2.400" transform="rotate(-45 8 8)"><rect x="0" y="5" width="9" height="6" rx="3"/><rect x="7" y="5" width="9" height="6" rx="3"/></g></svg>
<rect x="41.4" y="26.1" width="75.4" height="15.6" fill="#262b34" rx="1.7"/>
<svg viewBox="0 0 16 16" x="104.39" y="29.09" width="8.81" height="8.81" ><circle cx="6.500" cy="6.500" r="4.300" fill="none" stroke="#e0e0e0" stroke-width="2.200"/><path d="M9.800 9.800 14.300 14.300" stroke="#e0e0e0" stroke-width="2.600" stroke-linecap="round"/></svg>
<svg viewBox="0 0 16 16" x="122.79" y="29.39" width="8.81" height="8.81" ><path fill="#e0e0e0" d="M6.500 1H13a2 2 0 0 1 2 2v2h-3v3.500L9 10v5H3a2 2 0 0 1-2-2v-1.500h4V3a2 2 0 0 1 1.500-2z"/><path fill="#5fd26b" d="M10.300 9.300 15.600 12.400 10.300 15.500z"/></svg>
<svg viewBox="0 0 16 16" x="141.09" y="29.39" width="8.81" height="8.81" ><circle cx="8" cy="2.500" r="1.700" fill="#e0e0e0"/><circle cx="8" cy="8" r="1.700" fill="#e0e0e0"/><circle cx="8" cy="13.500" r="1.700" fill="#e0e0e0"/></svg>
<rect x="5" y="44" width="148" height="176.3" fill="#21262e" rx="1.7"/>
<rect x="9.9" y="62" width="1.1" height="9.8" fill="#c3c5c9"/>
<rect x="9.9" y="70.7" width="4.4" height="1.1" fill="#c3c5c9"/>
<rect x="10.1" y="71.8" width="0.7" height="45.2" fill="#6d7178"/>
<rect x="10.1" y="100.6" width="10.9" height="0.7" fill="#6d7178"/>
<rect x="10.1" y="116.3" width="10.9" height="0.7" fill="#6d7178"/>
<rect x="16.8" y="78" width="0.7" height="7.9" fill="#6d7178"/>
<rect x="16.8" y="85.2" width="11.2" height="0.7" fill="#6d7178"/>
<rect x="21" y="62" width="102.9" height="16" fill="#3a5572" rx="2"/>
<svg viewBox="0 0 16 16" x="7.25" y="51.35" width="6.3" height="6.3" ><path d="M2.500 5.500 8 11l5.500-5.500" fill="none" stroke="#a9acb2" stroke-width="2.500"/></svg>
<svg viewBox="0 0 16 16" x="16.59" y="49.79" width="8.81" height="8.81" ><circle cx="8" cy="8" r="7" fill="#8da5f3"/><path d="M7.200 7.600a3.300 3.300 0 0 1 6.400 0z" fill="#1d2229"/><path d="M3.500 9.300c.9 1.500 2.400 2.600 4.300 3" fill="none" stroke="#1d2229" stroke-width="2" stroke-linecap="round"/><path d="M2.300 6.200 5.500 4.600" fill="none" stroke="#5a6aa8" stroke-width="1.200"/></svg>
<svg viewBox="0 0 16 16" x="112.59" y="49.79" width="8.81" height="8.81" ><path fill="#ffdd65" d="M8 .8 15.700 14.500H.3z"/><path d="M7.100 5.200h1.800v5.200H7.100zM7.100 11.300h1.800v1.800H7.100z" fill="#21262e"/></svg>
<svg viewBox="0 0 16 16" x="126.19" y="49.79" width="8.81" height="8.81" ><path fill="#e0e0e0" d="M6.500 1H13a2 2 0 0 1 2 2v2h-3v7a3 3 0 0 1-3 3H3a2 2 0 0 1-2-2v-1.500h4V3a2 2 0 0 1 1.500-2z"/></svg>
<svg viewBox="0 0 16 16" x="139.59" y="49.79" width="8.81" height="8.81" ><path fill="#e0e0e0" fill-rule="evenodd" d="M8 1.300C4.300 1.300 1.400 4 .2 7.600a1.200 1.200 0 0 0 0 .8C1.400 12 4.300 14.700 8 14.700s6.600-2.700 7.800-6.300a1.200 1.200 0 0 0 0-.8C14.600 4 11.700 1.300 8 1.300zM8 3.700a4.300 4.300 0 0 1 0 8.600 4.300 4.300 0 0 1 0-8.600zM8 6.100a1.900 1.900 0 0 0 0 3.800 1.900 1.900 0 0 0 0-3.800z"/></svg>
<svg viewBox="0 0 16 16" x="14.05" y="67.05" width="6.3" height="6.3" ><path d="M2.500 5.500 8 11l5.500-5.500" fill="none" stroke="#a9acb2" stroke-width="2.500"/></svg>
<svg viewBox="0 0 16 16" x="23.39" y="65.49" width="8.81" height="8.81" ><g fill="#8da5f3"><path d="M.5.500h5v2.700H3.200v2.300H.5zM15.500.500v5h-2.700V3.200h-2.300V.500zM.5 15.500v-5h2.700v2.300h2.300v2.700zM15.500 15.500h-5v-2.700h2.300v-2.300h2.700z"/></g><circle cx="8" cy="8" r="3.400" fill="none" stroke="#8da5f3" stroke-width="2.800"/></svg>
<svg viewBox="0 0 16 16" x="125.99" y="65.49" width="8.81" height="8.81" ><g fill="none" stroke="#e0e0e0" stroke-width="2.300"><path d="M1.500 7.200A7.300 7.300 0 0 1 8.800 14.500M1.500 2.500a12 12 0 0 1 12 12"/></g><circle cx="3.300" cy="12.700" r="2" fill="#e0e0e0"/></svg>
<svg viewBox="0 0 16 16" x="139.59" y="65.49" width="8.81" height="8.81" ><path fill="#e0e0e0" fill-rule="evenodd" d="M8 1.300C4.300 1.300 1.400 4 .2 7.600a1.200 1.200 0 0 0 0 .8C1.400 12 4.300 14.700 8 14.700s6.600-2.700 7.800-6.300a1.200 1.200 0 0 0 0-.8C14.600 4 11.700 1.300 8 1.300zM8 3.700a4.300 4.300 0 0 1 0 8.600 4.300 4.300 0 0 1 0-8.600zM8 6.100a1.900 1.900 0 0 0 0 3.800 1.900 1.900 0 0 0 0-3.800z"/></svg>
<svg viewBox="0 0 16 16" x="29.99" y="80.99" width="8.81" height="8.81" ><rect x="2" y="2" width="12" height="12" fill="none" stroke="#8da5f3" stroke-width="2.200"/></svg>
<svg viewBox="0 0 16 16" x="139.59" y="80.99" width="8.81" height="8.81" ><path fill="#e0e0e0" fill-rule="evenodd" d="M8 1.300C4.300 1.300 1.400 4 .2 7.600a1.200 1.200 0 0 0 0 .8C1.400 12 4.300 14.700 8 14.700s6.600-2.700 7.800-6.300a1.200 1.200 0 0 0 0-.8C14.600 4 11.700 1.300 8 1.300zM8 3.700a4.300 4.300 0 0 1 0 8.600 4.300 4.300 0 0 1 0-8.600zM8 6.100a1.900 1.900 0 0 0 0 3.800 1.900 1.900 0 0 0 0-3.800z"/></svg>
<svg viewBox="0 0 16 16" x="23.39" y="96.49" width="8.81" height="8.81" ><path fill="#8da5f3" d="M5 1h6a4 4 0 0 1 4 4v6a4 4 0 0 1-4 4H5a4 4 0 0 1-4-4V5a4 4 0 0 1 4-4z"/><circle cx="4.600" cy="7.600" r="1.400" fill="#21262e"/><circle cx="11.400" cy="7.600" r="1.400" fill="#21262e"/><path d="M5.200 10.600h5.600v.6A2 2 0 0 1 8.800 13.200H7.200A2 2 0 0 1 5.200 11.200z" fill="#21262e"/></svg>
<svg viewBox="0 0 16 16" x="139.59" y="96.49" width="8.81" height="8.81" ><path fill="#e0e0e0" fill-rule="evenodd" d="M8 1.300C4.300 1.300 1.400 4 .2 7.600a1.200 1.200 0 0 0 0 .8C1.400 12 4.300 14.700 8 14.700s6.600-2.700 7.800-6.300a1.200 1.200 0 0 0 0-.8C14.600 4 11.700 1.300 8 1.300zM8 3.700a4.300 4.300 0 0 1 0 8.600 4.300 4.300 0 0 1 0-8.600zM8 6.100a1.900 1.900 0 0 0 0 3.800 1.900 1.900 0 0 0 0-3.800z"/></svg>
<svg viewBox="0 0 16 16" x="23.39" y="112.09" width="8.81" height="8.81" ><path d="M10 3A5.300 5.300 0 1 0 10 13.500" fill="none" stroke="#8da5f3" stroke-width="2.400"/><circle cx="7.300" cy="8.300" r="2.100" fill="#8da5f3"/><path d="M12 1.500h2.600v7.800H12zM12 11.200h2.600v2.600H12z" fill="#8da5f3"/></svg>
<svg viewBox="0 0 16 16" x="125.99" y="112.09" width="8.81" height="8.81" ><g fill="none" stroke="#e0e0e0" stroke-width="2.300"><path d="M1.500 7.200A7.300 7.300 0 0 1 8.800 14.500M1.500 2.500a12 12 0 0 1 12 12"/></g><circle cx="3.300" cy="12.700" r="2" fill="#e0e0e0"/></svg>
<svg viewBox="0 0 16 16" x="139.59" y="112.09" width="8.81" height="8.81" ><path fill="#e0e0e0" fill-rule="evenodd" d="M8 1.300C4.300 1.300 1.400 4 .2 7.600a1.200 1.200 0 0 0 0 .8C1.400 12 4.300 14.700 8 14.700s6.600-2.700 7.800-6.300a1.200 1.200 0 0 0 0-.8C14.600 4 11.700 1.300 8 1.300zM8 3.700a4.300 4.300 0 0 1 0 8.600 4.300 4.300 0 0 1 0-8.600zM8 6.100a1.900 1.900 0 0 0 0 3.800 1.900 1.900 0 0 0 0-3.800z"/></svg>
<rect x="160" y="6.8" width="795.8" height="213.5" fill="#363d4a"/>
<rect x="160" y="6.8" width="795.8" height="15.2" fill="#262b34" rx="1.7"/>
<rect x="380" y="6.8" width="70.1" height="15.6" fill="#363d4a"/>
<rect x="380" y="6.6" width="70.1" height="1.4" fill="#4f9ae0"/>
<svg viewBox="0 0 16 16" x="166.59" y="10.69" width="8.81" height="8.81" ><circle cx="8" cy="8" r="5.600" fill="none" stroke="#8da5f3" stroke-width="2.400"/></svg>
<svg viewBox="0 0 16 16" x="235.89" y="10.69" width="8.81" height="8.81" ><g fill="none" stroke="#8da5f3" stroke-width="2.500" stroke-linecap="round" stroke-linejoin="round"><path d="M9 6 7.600 10.300M8.700 7.600 3.200 5.300M8.700 7.800 12.600 9.600M7.600 10.300 3 14.600M7.600 10.300 10 11"/><path d="M13.800 11.600A2.300 2.300 0 1 0 13.800 14.400"/></g><circle cx="9.200" cy="3.100" r="2.700" fill="#8da5f3"/></svg>
<svg viewBox="0 0 16 16" x="283.29" y="10.69" width="8.81" height="8.81" ><circle cx="8" cy="8" r="5.600" fill="none" stroke="#8da5f3" stroke-width="2.400"/></svg>
<svg viewBox="0 0 16 16" x="336.59" y="10.69" width="8.81" height="8.81" ><g fill="none" stroke="#8da5f3" stroke-width="2.500" stroke-linecap="round" stroke-linejoin="round"><path d="M9 6 7.600 10.300M8.700 7.600 3.200 5.300M8.700 7.800 12.600 9.600M7.600 10.300 3 14.600M7.600 10.300 10 11"/><path d="M13.800 11.600A2.300 2.300 0 1 0 13.800 14.400"/></g><circle cx="9.200" cy="3.100" r="2.700" fill="#8da5f3"/></svg>
<svg viewBox="0 0 16 16" x="386.29" y="10.69" width="8.81" height="8.81" ><circle cx="8" cy="8" r="7" fill="#8da5f3"/><path d="M7.200 7.600a3.300 3.300 0 0 1 6.400 0z" fill="#1d2229"/><path d="M3.500 9.300c.9 1.500 2.400 2.600 4.300 3" fill="none" stroke="#1d2229" stroke-width="2" stroke-linecap="round"/><path d="M2.300 6.200 5.500 4.600" fill="none" stroke="#5a6aa8" stroke-width="1.200"/></svg>
<svg viewBox="0 0 16 16" x="435.15" y="11.05" width="8.1" height="8.1" ><path d="M2.500 2.500l11 11M13.500 2.500 2.500 13.500" stroke="#f0f0f0" stroke-width="2.800"/></svg>
<svg viewBox="0 0 16 16" x="456.19" y="10.69" width="8.81" height="8.81" ><circle cx="8" cy="8" r="5.600" fill="none" stroke="#8eef97" stroke-width="2.400"/></svg>
<svg viewBox="0 0 16 16" x="523.79" y="10.69" width="8.81" height="8.81" ><g fill="#8eef97" transform="translate(8 8) scale(1.13 .95) translate(-8 -8)"><circle cx="4.200" cy="5" r="2.500"/><path d="M.3 14.800C.3 10.600 2 9 4.200 9S8.100 10.600 8.100 14.800z"/><path d="M7 1.200h6a2 2 0 0 1 2 2v9.600a2 2 0 0 1-2 2H9v-2.400h3.500V3.600H7z"/><circle cx="9.800" cy="8" r="1.700"/></g></svg>
<svg viewBox="0 0 16 16" x="602.05" y="11.15" width="7.9" height="7.9" ><path d="M8 1v14M1 8h14" stroke="#a4a7ac" stroke-width="2"/></svg>
<svg viewBox="0 0 16 16" x="946.39" y="9.99" width="8.81" height="8.81" ><g fill="#e0e0e0"><path d="M1 1h5.500L4.600 2.900 7 5.300 5.300 7 2.900 4.600 1 6.500zM15 1v5.500L13.100 4.600 10.700 7 9 5.300l2.400-2.400L9.500 1zM1 15V9.500l1.900 1.900L5.300 9 7 10.700l-2.400 2.400L6.500 15zM15 15H9.500l1.900-1.900L9 10.700 10.700 9l2.400 2.400L15 9.500z"/></g></svg>
<svg viewBox="0 0 16 16" x="780.89" y="28.59" width="8.81" height="8.81" ><path d="M7.500 2.500H4A1.500 1.500 0 0 0 2.500 4v8A1.500 1.500 0 0 0 4 13.500h8a1.500 1.500 0 0 0 1.500-1.500V9" fill="none" stroke="#e0e0e0" stroke-width="2.200"/><path d="M7 9l6-6" fill="none" stroke="#e0e0e0" stroke-width="2.400"/><path d="M9 1h6v6z" fill="#e0e0e0"/></svg>
<svg viewBox="0 0 16 16" x="845.19" y="28.59" width="8.81" height="8.81" ><circle cx="9" cy="4.500" r="3.200" fill="none" stroke="#e0e0e0" stroke-width="2"/><path d="M6.600 6.900 3.200 10.300" stroke="#e0e0e0" stroke-width="2.200"/><path d="M.5 11h15v4.500H.5z" fill="#e0e0e0"/><path d="M3.200 12.300v2M5.900 12.300v2M8.400 12.300v2M10.900 12.300v2M13.200 12.300v2" stroke="#363d4a" stroke-width="1"/></svg>
<rect x="907.6" y="25.4" width="0.7" height="15.8" fill="#444b58"/>
<svg viewBox="0 0 16 16" x="911.59" y="28.89" width="8.81" height="8.81" ><path d="M10.500 2 5.500 8l5 6" fill="none" stroke="#e0e0e0" stroke-width="2.200"/></svg>
<svg viewBox="0 0 16 16" x="924.79" y="28.89" width="8.81" height="8.81" ><path d="M5.500 2 10.500 8l-5 6" fill="none" stroke="#8a8e96" stroke-width="2.200"/></svg>
<rect x="937.2" y="25.4" width="0.7" height="15.8" fill="#444b58"/>
<svg viewBox="0 0 16 16" x="943.99" y="28.19" width="8.81" height="8.81" ><g fill="#e0e0e0"><rect x="4" y="1.500" width="11.500" height="8.500" rx="1.200"/><rect x="1" y="5.500" width="11.500" height="9" rx="1.200" stroke="#363d4a" stroke-width="1.200"/></g></svg>
<rect x="162.2" y="43.6" width="84.8" height="15.8" fill="#262b34" rx="1.7"/>
<svg viewBox="0 0 16 16" x="234.79" y="46.79" width="8.81" height="8.81" ><circle cx="6.500" cy="6.500" r="4.300" fill="none" stroke="#e0e0e0" stroke-width="2.200"/><path d="M9.800 9.800 14.300 14.300" stroke="#e0e0e0" stroke-width="2.600" stroke-linecap="round"/></svg>
<rect x="162.2" y="62" width="84.8" height="154.9" fill="#262c36" rx="1.7"/>
<rect x="163" y="78.6" width="83.6" height="15.2" fill="#3a5572" rx="1.7"/>
<svg viewBox="0 0 16 16" x="164.59" y="66.59" width="8.81" height="8.81" ><path fill="#e0e0e0" d="M6.600.8h2.800l.4 2.100 1 .4 1.800-1.200 2 2-1.200 1.800.4 1 2.100.4v2.800l-2.100.4-.4 1 1.200 1.800-2 2-1.800-1.200-1 .4-.4 2.100H6.600l-.4-2.100-1-.4-1.800 1.200-2-2 1.200-1.800-.4-1-2.100-.4V6.600l2.100-.4.4-1-1.200-1.800 2-2 1.800 1.200 1-.4z"/><circle cx="8" cy="8" r="2.300" fill="#262c36"/></svg>
<svg viewBox="0 0 16 16" x="164.59" y="82.19" width="8.81" height="8.81" ><path fill="#e0e0e0" d="M6.600.8h2.800l.4 2.100 1 .4 1.800-1.200 2 2-1.200 1.800.4 1 2.100.4v2.800l-2.100.4-.4 1 1.200 1.800-2 2-1.800-1.200-1 .4-.4 2.100H6.600l-.4-2.100-1-.4-1.800 1.200-2-2 1.200-1.800-.4-1-2.100-.4V6.600l2.100-.4.4-1-1.200-1.800 2-2 1.800 1.200 1-.4z"/><circle cx="8" cy="8" r="2.300" fill="#262c36"/></svg>
<svg viewBox="0 0 16 16" x="164.59" y="97.69" width="8.81" height="8.81" ><path fill="#e0e0e0" d="M6.600.8h2.800l.4 2.100 1 .4 1.800-1.200 2 2-1.200 1.800.4 1 2.100.4v2.800l-2.100.4-.4 1 1.200 1.800-2 2-1.800-1.200-1 .4-.4 2.100H6.600l-.4-2.100-1-.4-1.800 1.200-2-2 1.200-1.800-.4-1-2.100-.4V6.600l2.100-.4.4-1-1.200-1.800 2-2 1.800 1.200 1-.4z"/><circle cx="8" cy="8" r="2.300" fill="#262c36"/></svg>
<svg viewBox="0 0 16 16" x="164.59" y="113.29" width="8.81" height="8.81" ><path fill="#e0e0e0" d="M6.600.8h2.800l.4 2.100 1 .4 1.800-1.200 2 2-1.200 1.800.4 1 2.100.4v2.800l-2.100.4-.4 1 1.200 1.800-2 2-1.800-1.200-1 .4-.4 2.100H6.600l-.4-2.100-1-.4-1.800 1.200-2-2 1.200-1.800-.4-1-2.100-.4V6.600l2.100-.4.4-1-1.200-1.800 2-2 1.800 1.200 1-.4z"/><circle cx="8" cy="8" r="2.300" fill="#262c36"/></svg>
<svg viewBox="0 0 16 16" x="164.59" y="128.89" width="8.81" height="8.81" ><path fill="#e0e0e0" d="M6.600.8h2.800l.4 2.100 1 .4 1.800-1.200 2 2-1.200 1.800.4 1 2.100.4v2.800l-2.100.4-.4 1 1.200 1.800-2 2-1.800-1.200-1 .4-.4 2.100H6.600l-.4-2.100-1-.4-1.800 1.200-2-2 1.200-1.800-.4-1-2.100-.4V6.600l2.100-.4.4-1-1.200-1.800 2-2 1.800 1.200 1-.4z"/><circle cx="8" cy="8" r="2.300" fill="#262c36"/></svg>
<rect x="252.2" y="43.4" width="701.6" height="176.9" fill="#1d2229" rx="1.4"/>
<rect x="252.2" y="66.54" width="652.4" height="9.62" fill="#2b3038"/>
<rect x="591.4" y="43.4" width="0.6" height="176.9" fill="#262b33"/>
<rect x="665.2" y="43.4" width="0.7" height="176.9" fill="#2a3039"/>
<rect x="905" y="43.4" width="45.3" height="28.6" fill="#30353d"/>
<rect x="906" y="43.5" width="5" height="0.5" fill="#ff7085" opacity=".7"/>
<rect x="906" y="44.36" width="3" height="0.5" fill="#42ffc2" opacity=".7"/>
<rect x="906" y="46.08" width="2" height="0.5" fill="#e0e0e0" opacity=".7"/>
<rect x="909" y="46.08" width="9" height="0.5" fill="#73777e" opacity=".7"/>
<rect x="906" y="46.94" width="4" height="0.5" fill="#ff7085" opacity=".7"/>
<rect x="907" y="47.8" width="6" height="0.5" fill="#73777e" opacity=".7"/>
<rect x="906" y="50.38" width="4" height="0.5" fill="#ff7085" opacity=".7"/>
<rect x="910" y="50.38" width="10" height="0.5" fill="#62dcf2" opacity=".7"/>
<rect x="907" y="51.24" width="4" height="0.5" fill="#57b3ff" opacity=".7"/>
<rect x="906" y="52.96" width="9" height="0.5" fill="#62dcf2" opacity=".7"/>
<rect x="907" y="53.82" width="7" height="0.5" fill="#57b3ff" opacity=".7"/>
<rect x="908" y="54.68" width="4" height="0.5" fill="#ffeda1" opacity=".7"/>
<svg viewBox="0 0 16 16" x="270.25" y="87.65" width="5.9" height="5.9" ><path fill="#5fb2f0" d="M9 1 15.500 6.300 9 11.600V8.500C6 8.500 4.200 10 3.700 14.800H.8C.8 8 4.500 4.600 9 4.300z"/></svg>
<svg viewBox="0 0 16 16" x="270.05" y="126.35" width="5.9" height="5.9" ><path fill="#7dea8a" d="M.5 6.300h5.500v-3.300l5 5-5 5V9.700H.5z"/><path d="M9 2.200h5.300v11.600H9" fill="none" stroke="#7dea8a" stroke-width="2.200"/></svg>
<svg viewBox="0 0 16 16" x="270.05" y="155.23" width="5.9" height="5.9" ><path fill="#7dea8a" d="M.5 6.300h5.500v-3.300l5 5-5 5V9.700H.5z"/><path d="M9 2.200h5.300v11.600H9" fill="none" stroke="#7dea8a" stroke-width="2.200"/></svg>
<svg viewBox="0 0 16 16" x="290.1" y="88.1" width="5.6" height="5.6" ><path d="M3 5.500 8 10.500l5-5" fill="none" stroke="#9da1a8" stroke-width="2.200"/></svg>
<svg viewBox="0 0 16 16" x="290.1" y="126.6" width="5.6" height="5.6" ><path d="M3 5.500 8 10.500l5-5" fill="none" stroke="#9da1a8" stroke-width="2.200"/></svg>
<svg viewBox="0 0 16 16" x="290.1" y="155.48" width="5.6" height="5.6" ><path d="M3 5.500 8 10.500l5-5" fill="none" stroke="#9da1a8" stroke-width="2.200"/></svg>
<svg viewBox="0 0 16 16" x="290.1" y="165.1" width="5.6" height="5.6" ><path d="M3 5.500 8 10.500l5-5" fill="none" stroke="#9da1a8" stroke-width="2.200"/></svg>
<svg viewBox="0 0 16 16" x="297.5" y="97.73" width="5.4" height="5.4" ><path d="M2 3 7.500 8 2 13M11.500 2.500v11" fill="none" stroke="#5b616b" stroke-width="2"/></svg>
<svg viewBox="0 0 16 16" x="297.5" y="136.23" width="5.4" height="5.4" ><path d="M2 3 7.500 8 2 13M11.500 2.500v11" fill="none" stroke="#5b616b" stroke-width="2"/></svg>
<svg viewBox="0 0 16 16" x="297.5" y="165.1" width="5.4" height="5.4" ><path d="M2 3 7.500 8 2 13M11.500 2.500v11" fill="none" stroke="#5b616b" stroke-width="2"/></svg>
<svg viewBox="0 0 16 16" x="297.5" y="174.73" width="5.4" height="5.4" ><path d="M2 3 7.500 8 2 13M11.500 2.500v11" fill="none" stroke="#5b616b" stroke-width="2"/></svg>
<svg viewBox="0 0 16 16" x="297.5" y="184.35" width="5.4" height="5.4" ><path d="M2 3 7.500 8 2 13M11.500 2.500v11" fill="none" stroke="#5b616b" stroke-width="2"/></svg>
<svg viewBox="0 0 16 16" x="312.22" y="174.73" width="5.4" height="5.4" ><path d="M2 3 7.500 8 2 13M11.500 2.500v11" fill="none" stroke="#5b616b" stroke-width="2"/></svg>
<rect x="0.3" y="0.9" width="1.4" height="219.4" fill="#06070a"/>
<rect x="0.3" y="218.7" width="955.5" height="1.6" fill="#06070a"/>
<rect x="954.2" y="0.9" width="1.6" height="219.4" fill="#06070a"/>
</g></svg>
<span class="t" style="top:9.76px;height:11.48px;line-height:11.48px;font-size:8.2px;color:#dcdde0;left:8.43px;letter-spacing:-0.23px;">Scene</span>
<span class="t" style="top:9.76px;height:11.48px;line-height:11.48px;font-size:8.2px;color:#8a8e96;left:43.03px;letter-spacing:0.58px;">Import</span>
<span class="t" style="top:28.46px;height:11.48px;line-height:11.48px;font-size:8.2px;color:#8a8e96;left:44.43px;letter-spacing:0.15px;">Filter: name, t:t</span>
<span class="t" style="top:48.86px;height:11.48px;line-height:11.48px;font-size:8.2px;color:#dcdde0;left:28.53px;letter-spacing:0.02px;">Enemies</span>
<span class="t" style="top:64.56px;height:11.48px;line-height:11.48px;font-size:8.2px;color:#ffffff;left:35.23px;letter-spacing:0.13px;">Area2D</span>
<span class="t" style="top:80.06px;height:11.48px;line-height:11.48px;font-size:8.2px;color:#dcdde0;left:42.13px;letter-spacing:-0.02px;">CollisionShape2D</span>
<span class="t" style="top:95.56px;height:11.48px;line-height:11.48px;font-size:8.2px;color:#dcdde0;left:35.23px;letter-spacing:0.1px;">Sprite2D</span>
<span class="t" style="top:111.16px;height:11.48px;line-height:11.48px;font-size:8.2px;color:#dcdde0;left:35.23px;letter-spacing:0px;">VisibleOnScreenNoti...</span>
<span class="t" style="top:9.76px;height:11.48px;line-height:11.48px;font-size:8.2px;color:#8a8e96;left:177.23px;letter-spacing:-0.06px;">game_scene</span>
<span class="t" style="top:9.76px;height:11.48px;line-height:11.48px;font-size:8.2px;color:#8a8e96;left:247.33px;letter-spacing:-0.04px;">Player</span>
<span class="t" style="top:9.76px;height:11.48px;line-height:11.48px;font-size:8.2px;color:#8a8e96;left:294.13px;letter-spacing:0.35px;">barriers</span>
<span class="t" style="top:9.76px;height:11.48px;line-height:11.48px;font-size:8.2px;color:#8a8e96;left:347.63px;letter-spacing:0.2px;">Bubble</span>
<span class="t" style="top:9.76px;height:11.48px;line-height:11.48px;font-size:8.2px;color:#dcdde0;left:397.33px;letter-spacing:0.17px;">enemies</span>
<span class="t" style="top:9.76px;height:11.48px;line-height:11.48px;font-size:8.2px;color:#8a8e96;left:467.23px;letter-spacing:-0.01px;">main_scene</span>
<span class="t" style="top:9.76px;height:11.48px;line-height:11.48px;font-size:8.2px;color:#8a8e96;left:534.63px;letter-spacing:0.22px;">texture_button</span>
<span class="t" style="top:27.96px;height:11.48px;line-height:11.48px;font-size:8.2px;color:#dcdde0;left:165.23px;letter-spacing:0.01px;">File</span>
<span class="t" style="top:27.96px;height:11.48px;line-height:11.48px;font-size:8.2px;color:#dcdde0;left:187.13px;letter-spacing:0.34px;">Edit</span>
<span class="t" style="top:27.96px;height:11.48px;line-height:11.48px;font-size:8.2px;color:#dcdde0;left:210.43px;letter-spacing:-0.17px;">Search</span>
<span class="t" style="top:27.96px;height:11.48px;line-height:11.48px;font-size:8.2px;color:#dcdde0;left:244.53px;letter-spacing:-0.05px;">Go To</span>
<span class="t" style="top:27.96px;height:11.48px;line-height:11.48px;font-size:8.2px;color:#dcdde0;left:274.23px;letter-spacing:0.37px;">Debug</span>
<span class="t" style="top:27.96px;height:11.48px;line-height:11.48px;font-size:8.2px;color:#dcdde0;left:791.93px;letter-spacing:0.01px;">Online Docs</span>
<span class="t" style="top:27.96px;height:11.48px;line-height:11.48px;font-size:8.2px;color:#dcdde0;left:856.23px;letter-spacing:0px;">Search Help</span>
<span class="t" style="top:46.26px;height:11.48px;line-height:11.48px;font-size:8.2px;color:#a9acb2;left:165.43px;letter-spacing:0.07px;">Filter Scripts</span>
<span class="t" style="top:65.66px;height:11.48px;line-height:11.48px;font-size:8.2px;color:#74aee6;left:177.03px;letter-spacing:0.23px;">Bubble.gd</span>
<span class="t" style="top:81.26px;height:11.48px;line-height:11.48px;font-size:8.2px;color:#ffffff;left:177.03px;letter-spacing:0.15px;">enemies.gd(*)</span>
<span class="t" style="top:96.76px;height:11.48px;line-height:11.48px;font-size:8.2px;color:#dcdde0;left:177.03px;letter-spacing:0px;">main_scene.gd</span>
<span class="t" style="top:112.36px;height:11.48px;line-height:11.48px;font-size:8.2px;color:#dcdde0;left:177.03px;letter-spacing:0.02px;">Player.gd</span>
<span class="t" style="top:127.96px;height:11.48px;line-height:11.48px;font-size:8.2px;color:#dcdde0;left:177.03px;letter-spacing:0.22px;">texture_button....</span>
<span class="m" style="top:48.44px;height:9.36px;line-height:9.36px;font-size:6.68px;color:#8fb79a;right:670.6px;text-align:right;letter-spacing:-0.33px;">1</span>
<span class="m" style="top:58.06px;height:9.36px;line-height:9.36px;font-size:6.68px;color:#8fb79a;right:670.6px;text-align:right;letter-spacing:-0.33px;">2</span>
<span class="m" style="top:67.69px;height:9.36px;line-height:9.36px;font-size:6.68px;color:#8fb79a;right:670.6px;text-align:right;letter-spacing:-0.33px;">3</span>
<span class="m" style="top:77.31px;height:9.36px;line-height:9.36px;font-size:6.68px;color:#8fb79a;right:670.6px;text-align:right;letter-spacing:-0.33px;">4</span>
<span class="m" style="top:86.94px;height:9.36px;line-height:9.36px;font-size:6.68px;color:#8fb79a;right:670.6px;text-align:right;letter-spacing:-0.33px;">5</span>
<span class="m" style="top:96.56px;height:9.36px;line-height:9.36px;font-size:6.68px;color:#8fb79a;right:670.6px;text-align:right;letter-spacing:-0.33px;">6</span>
<span class="m" style="top:106.19px;height:9.36px;line-height:9.36px;font-size:6.68px;color:#8fb79a;right:670.6px;text-align:right;letter-spacing:-0.33px;">7</span>
<span class="m" style="top:115.81px;height:9.36px;line-height:9.36px;font-size:6.68px;color:#8fb79a;right:670.6px;text-align:right;letter-spacing:-0.33px;">8</span>
<span class="m" style="top:125.44px;height:9.36px;line-height:9.36px;font-size:6.68px;color:#8fb79a;right:670.6px;text-align:right;letter-spacing:-0.33px;">9</span>
<span class="m" style="top:135.06px;height:9.36px;line-height:9.36px;font-size:6.68px;color:#8fb79a;right:670.6px;text-align:right;letter-spacing:-0.33px;">10</span>
<span class="m" style="top:144.69px;height:9.36px;line-height:9.36px;font-size:6.68px;color:#8fb79a;right:670.6px;text-align:right;letter-spacing:-0.33px;">11</span>
<span class="m" style="top:154.31px;height:9.36px;line-height:9.36px;font-size:6.68px;color:#8fb79a;right:670.6px;text-align:right;letter-spacing:-0.33px;">12</span>
<span class="m" style="top:163.94px;height:9.36px;line-height:9.36px;font-size:6.68px;color:#73777e;right:670.6px;text-align:right;letter-spacing:-0.33px;">13</span>
<span class="m" style="top:173.56px;height:9.36px;line-height:9.36px;font-size:6.68px;color:#8fb79a;right:670.6px;text-align:right;letter-spacing:-0.33px;">14</span>
<span class="m" style="top:183.19px;height:9.36px;line-height:9.36px;font-size:6.68px;color:#8fb79a;right:670.6px;text-align:right;letter-spacing:-0.33px;">15</span>
<span class="m" style="top:192.81px;height:9.36px;line-height:9.36px;font-size:6.68px;color:#8fb79a;right:670.6px;text-align:right;letter-spacing:-0.33px;">16</span>
<span class="m" style="top:48.44px;height:9.36px;line-height:9.36px;font-size:6.68px;color:#cdcfd2;left:297.6px;letter-spacing:-0.33px;"><span style="color:#ff7085">extends </span><span style="color:#8fffdb">RigidBody2D</span></span>
<span class="m" style="top:77.31px;height:9.36px;line-height:9.36px;font-size:6.68px;color:#cdcfd2;left:297.6px;letter-spacing:-0.33px;"><span style="color:#73777e"># Called when the node enters the scene tree for the first time.</span></span>
<span class="m" style="top:86.94px;height:9.36px;line-height:9.36px;font-size:6.68px;color:#cdcfd2;left:297.6px;letter-spacing:-0.33px;"><span style="color:#ff7085">func </span><span style="color:#62dcf2">_ready</span><span style="color:#abc9ff">():</span></span>
<span class="m" style="top:96.56px;height:9.36px;line-height:9.36px;font-size:6.68px;color:#cdcfd2;left:297.6px;letter-spacing:-0.33px;"><span style="color:#cdcfd2">    </span><span style="color:#ff8ccc">pass </span><span style="color:#73777e"># Replace with function body.</span></span>
<span class="m" style="top:125.44px;height:9.36px;line-height:9.36px;font-size:6.68px;color:#cdcfd2;left:297.6px;letter-spacing:-0.33px;"><span style="color:#ff7085">func </span><span style="color:#62dcf2">_on_visible_on_screen_notifier_2d_screen_exited</span><span style="color:#abc9ff">():</span></span>
<span class="m" style="top:135.06px;height:9.36px;line-height:9.36px;font-size:6.68px;color:#cdcfd2;left:297.6px;letter-spacing:-0.33px;"><span style="color:#cdcfd2">    </span><span style="color:#57b3ff">queue_free</span><span style="color:#abc9ff">()</span></span>
<span class="m" style="top:154.31px;height:9.36px;line-height:9.36px;font-size:6.68px;color:#cdcfd2;left:297.6px;letter-spacing:-0.33px;"><span style="color:#ff7085">func </span><span style="color:#62dcf2">_on_area_2d_body_entered</span><span style="color:#abc9ff">(</span><span style="color:#cdcfd2">body</span><span style="color:#abc9ff">):</span></span>
<span class="m" style="top:163.94px;height:9.36px;line-height:9.36px;font-size:6.68px;color:#cdcfd2;left:297.6px;letter-spacing:-0.33px;"><span style="color:#cdcfd2">    </span><span style="color:#ff8ccc">if </span><span style="color:#cdcfd2">body</span><span style="color:#abc9ff">.</span><span style="color:#57b3ff">is_in_group</span><span style="color:#abc9ff">(</span><span style="color:#ffeda1">&quot;bubbles&quot;</span><span style="color:#abc9ff">):</span></span>
<span class="m" style="top:173.56px;height:9.36px;line-height:9.36px;font-size:6.68px;color:#cdcfd2;left:297.6px;letter-spacing:-0.33px;"><span style="color:#cdcfd2">        </span><span style="color:#a3a3f5">print</span><span style="color:#abc9ff">(</span><span style="color:#ffeda1">&quot;COLLISION&quot;</span><span style="color:#abc9ff">)</span></span>
</div>
</body></html>
